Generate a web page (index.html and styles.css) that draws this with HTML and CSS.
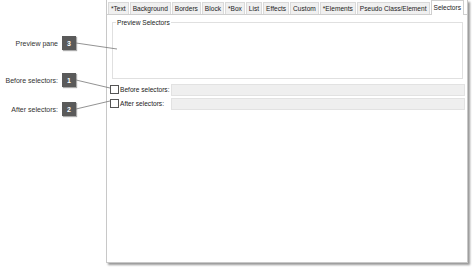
FILE: index.html
```html
<!DOCTYPE html>
<html lang="en">
<head>
    <meta charset="UTF-8">
    <title>Selectors</title>
    <link rel="stylesheet" href="styles.css">
</head>
<body>
    <div class="notes">
        <div class="note note-preview"><span>Preview pane</span><b>3</b></div>
        <div class="note note-before"><span>Before selectors:</span><b>1</b></div>
        <div class="note note-after"><span>After selectors:</span><b>2</b></div>
    </div>

    <div class="window">
        <div class="tabs">
            <div class="tab">*Text</div>
            <div class="tab">Background</div>
            <div class="tab">Borders</div>
            <div class="tab">Block</div>
            <div class="tab">*Box</div>
            <div class="tab">List</div>
            <div class="tab">Effects</div>
            <div class="tab">Custom</div>
            <div class="tab">*Elements</div>
            <div class="tab">Pseudo Class/Element</div>
            <div class="tab active">Selectors</div>
        </div>
        <div class="panel">
            <fieldset class="group">
                <legend>Preview Selectors</legend>
            </fieldset>
            <div class="row">
                <span class="check"></span>
                <label>Before selectors:</label>
                <div class="field"></div>
            </div>
            <div class="row">
                <span class="check"></span>
                <label>After selectors:</label>
                <div class="field"></div>
            </div>
        </div>
    </div>

    <!-- connector lines from the callouts to the controls -->
    <svg class="lines" width="474" height="268">
        <line x1="76" y1="43" x2="117" y2="49" />
        <line x1="76" y1="80" x2="110" y2="88" />
        <line x1="76" y1="109" x2="110" y2="101" />
    </svg>
</body>
</html>
```

FILE: styles.css
```css
body {
    margin: 0;
    width: 474px;
    height: 268px;
    display: flex;
    background: #fff;
    font-family: 'Liberation Sans', Arial, sans-serif;
    color: #222;
    overflow: hidden;
}
.notes {
    width: 106px;
    flex-shrink: 0;
    display: flex;
    flex-direction: column;
}
.note {
    display: flex;
    align-items: center;
    justify-content: flex-end;
    gap: 4px;
    width: 76px;
    font-size: 7px;
    color: #333;
}
.note b {
    width: 14px;
    height: 14px;
    background: #5a5a5a;
    color: #fff;
    font-size: 7px;
    display: flex;
    align-items: center;
    justify-content: center;
    box-shadow: 1px 1px 1px #aaa;
}
.note-preview {
    margin-top: 36px;
}
.note-before {
    margin-top: 23px;
}
.note-after {
    margin-top: 15px;
}
.window {
    width: 360px;
    height: 262px;
    display: flex;
    flex-direction: column;
    background: #fff;
    border: 1px solid #c8c8c8;
    border-top: none;
    box-shadow: 2px 2px 2px #999;
}
.tabs {
    display: flex;
    height: 14px;
    padding: 0 2px 0 1px;
    font-size: 6.6px;
    color: #222;
}
.tab {
    flex: 1 1 auto;
    padding: 0 1px;
    margin-top: 2px;
    margin-right: 1px;
    line-height: 11px;
    text-align: center;
    background: #f0f0f0;
    border: 1px solid #dadada;
    border-bottom: none;
    white-space: nowrap;
}
.tab.active {
    margin-top: 0;
    line-height: 13px;
    background: #fff;
    border-color: #cfcfcf;
    margin-bottom: -1px;
    position: relative;
}
.panel {
    flex: 1;
    border-top: 1px solid #cfcfcf;
    padding: 4px 2px 0 3px;
}
.group {
    margin: 0 2px 0 2px;
    padding: 0;
    height: 58px;
    border: 1px solid #e0e0e0;
}
.group legend {
    font-size: 6.6px;
    padding: 0 1px;
    margin-left: 3px;
    color: #222;
}
.row {
    display: flex;
    align-items: center;
    height: 11px;
    font-size: 6.6px;
}
.row + .row {
    margin-top: 3px;
}
.group + .row {
    margin-top: 5px;
}
.check {
    width: 7px;
    height: 7px;
    border: 1px solid #555;
    background: #fff;
    margin-right: 1px;
}
.row label {
    width: 51px;
}
.field {
    flex: 1;
    height: 10px;
    background: #efefef;
    border: 1px solid #e2e2e2;
}
.lines {
    position: absolute;
    left: 0;
    top: 0;
    pointer-events: none;
}
.lines line {
    stroke: #777;
    stroke-width: 0.8;
}
```
